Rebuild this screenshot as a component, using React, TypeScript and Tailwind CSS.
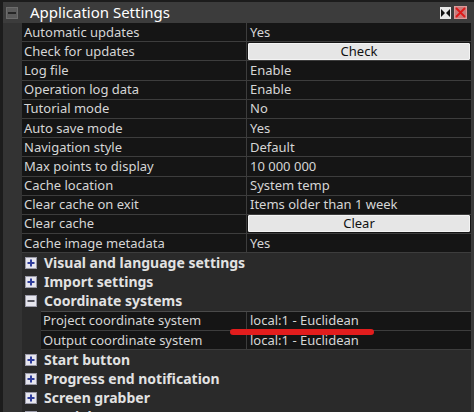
import React from "react";

type Row = { name: string; value?: string; button?: string };

const rows: Row[] = [
  { name: "Automatic updates", value: "Yes" },
  { name: "Check for updates", button: "Check" },
  { name: "Log file", value: "Enable" },
  { name: "Operation log data", value: "Enable" },
  { name: "Tutorial mode", value: "No" },
  { name: "Auto save mode", value: "Yes" },
  { name: "Navigation style", value: "Default" },
  { name: "Max points to display", value: "10 000 000" },
  { name: "Cache location", value: "System temp" },
  { name: "Clear cache on exit", value: "Items older than 1 week" },
  { name: "Clear cache", button: "Clear" },
  { name: "Cache image metadata", value: "Yes" },
];

function Box({ open }: { open?: boolean }) {
  return (
    <div className="w-[12px] h-[12px] bg-[#e6e6ee] border border-[#9a9aa8] flex items-center justify-center shrink-0">
      <svg width="8" height="8" viewBox="0 0 8 8">
        <rect x="0.5" y="3" width="7" height="2" fill={open ? "#55555f" : "#2f3d9c"} />
        {!open && <rect x="3" y="0.5" width="2" height="7" fill="#2f3d9c" />}
      </svg>
    </div>
  );
}

function Group({ label, open }: { label: string; open?: boolean }) {
  return (
    <div className="h-[19.2px] shrink-0 flex items-center pl-[3px] gap-[7px]">
      <Box open={open} />
      <span className="text-[14px] font-bold text-[#e2e2e2] leading-none whitespace-nowrap">{label}</span>
    </div>
  );
}

function PropRow({ r, nameW }: { r: Row; nameW: string }) {
  return (
    <div className="h-[19.2px] shrink-0 flex border-b border-[#3d3d3d] bg-[#151515] box-border">
      <div className={`${nameW} shrink-0 border-r border-[#3d3d3d] pl-[2px] flex items-center text-[13px] text-[#d6d6d6] whitespace-nowrap leading-none`}>
        {r.name}
      </div>
      <div className="flex-1 flex items-center text-[13px] text-[#d6d6d6] whitespace-nowrap leading-none">
        {r.button ? (
          <div className="mx-[1px] h-[17px] w-full bg-[#e6e6e6] border border-[#f4f4f4] rounded-[1px] flex items-center justify-center text-[#111]">
            {r.button}
          </div>
        ) : (
          <span className="pl-[3px]">{r.value}</span>
        )}
      </div>
    </div>
  );
}

export default function App() {
  return (
    <div className="w-[474px] h-[412px] overflow-hidden bg-[#2a2a2a] flex flex-col relative font-['Noto_Sans',sans-serif]">
      {/* title bar */}
      <div className="h-[23px] shrink-0 flex items-center bg-[#3c3c3c] border-t-[2px] border-[#1c1c1c] border-l-[3px] relative">
        <div className="ml-[3px] w-[12px] h-[12px] bg-[#5b5b5b] border border-[#6c6c6c] flex items-center justify-center">
          <div className="w-[8px] h-[2px] bg-[#262626]" />
        </div>
        <span className="ml-[12px] text-[15px] text-white leading-none whitespace-nowrap">Application Settings</span>
        <div className="ml-auto mr-[7px] flex items-center gap-[3px]">
          <div className="w-[11px] h-[12px] bg-[#e8e8e8] flex items-center justify-center">
            <svg width="9" height="8" viewBox="0 0 9 8">
              <polygon points="0,0 4,4 0,8" fill="#111" />
              <polygon points="9,0 5,4 9,8" fill="#111" />
            </svg>
          </div>
          <div className="w-[13px] h-[13px] bg-[#c97a7a] border border-[#dc9a9a] flex items-center justify-center">
            <svg width="11" height="11" viewBox="0 0 11 11">
              <path d="M1 1 L10 10 M10 1 L1 10" stroke="#e01818" strokeWidth="1.8" />
            </svg>
          </div>
        </div>
      </div>

      <div className="flex flex-1 min-h-0">
        <div className="w-[22px] shrink-0 bg-[#333333] border-l-[3px] border-[#1c1c1c]" />
        <div className="flex-1 flex flex-col min-w-0">
          {rows.map((r) => (
            <PropRow key={r.name} r={r} nameW="w-[225px]" />
          ))}
          <Group label="Visual and language settings" />
          <Group label="Import settings" />
          <Group label="Coordinate systems" open />
          <div className="ml-[19px] shrink-0 border-t border-[#4a4a4a]">
            <PropRow r={{ name: "Project coordinate system", value: "local:1 - Euclidean" }} nameW="w-[206px]" />
            <PropRow r={{ name: "Output coordinate system", value: "local:1 - Euclidean" }} nameW="w-[206px]" />
          </div>
          <Group label="Start button" />
          <Group label="Progress end notification" />
          <Group label="Screen grabber" />
          <Group label="Spatial manager" />
        </div>
        <div className="w-[3px] shrink-0 bg-[#3a3a3a]" />
      </div>

      {/* red annotation underline */}
      <div className="absolute left-[230px] top-[329px] w-[144px] h-[6px] rounded-full bg-[#e21d1d]" />
    </div>
  );
}
